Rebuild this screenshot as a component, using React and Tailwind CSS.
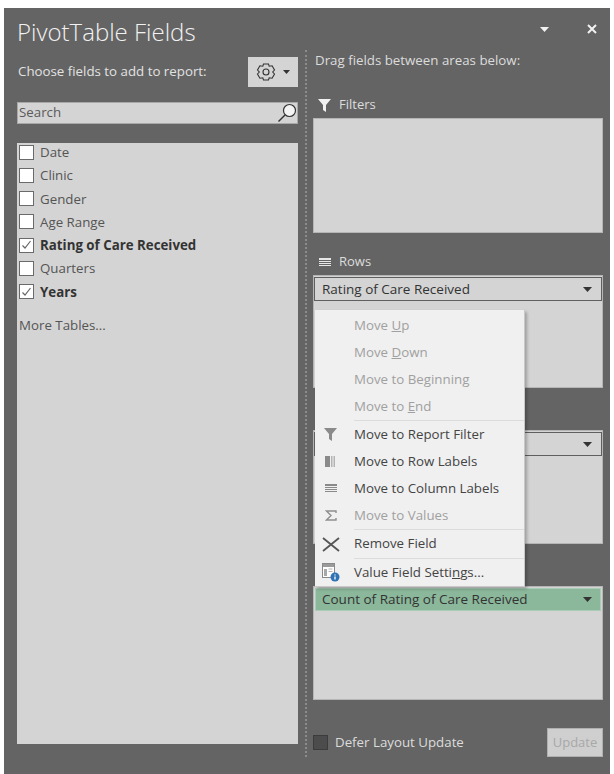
import React from "react";

const font = { fontFamily: '"Open Sans", "Noto Sans", sans-serif' };

const fields = [
  { name: "Date" },
  { name: "Clinic" },
  { name: "Gender" },
  { name: "Age Range" },
  { name: "Rating of Care Received", on: true },
  { name: "Quarters" },
  { name: "Years", on: true },
];

const Caret = ({ className = "" }) => (
  <svg width="9" height="5" viewBox="0 0 9 5" className={className}>
    <path d="M0 0h9L4.5 5z" fill="currentColor" />
  </svg>
);

const Funnel = ({ color }) => (
  <svg width="13" height="13" viewBox="0 0 13 13">
    <path d="M0 0h13L8 6v7L5 11V6z" fill={color} />
  </svg>
);

const RowLines = ({ color }) => (
  <svg width="12" height="9" viewBox="0 0 12 9">
    <path d="M0 0h12v2H0z" fill={color} />
    <path d="M0 3.5h12M0 5.5h12M0 7.5h12" stroke={color} strokeWidth="1" />
  </svg>
);

const ColumnBars = () => (
  <svg width="11" height="11" viewBox="0 0 11 11">
    <path d="M0 0h5v11H0z" fill="#8a8a8a" />
    <path d="M6 0h1.500v11H6zM8.500 0H10v11H8.500z" fill="#b4b4b4" />
  </svg>
);

const Sigma = () => (
  <svg width="12" height="11" viewBox="0 0 12 11">
    <path d="M11 3V1H1.500l4.500 4.500L1.500 10H11V8" fill="none" stroke="#8e8e8e" strokeWidth="1.400" />
  </svg>
);

const CrossIcon = () => (
  <svg width="18" height="15" viewBox="0 0 18 15">
    <path d="M1 1l16 13M17 1L1 14" stroke="#555" strokeWidth="1.800" fill="none" />
  </svg>
);

const SettingsIcon = () => (
  <svg width="18" height="19" viewBox="0 0 18 19">
    <rect x="0.500" y="0.500" width="12" height="14" fill="#fff" stroke="#8a8a8a" />
    <path d="M1 1h11v3H1z" fill="#9a9a9a" />
    <path d="M2 6h3v7H2z" fill="#a8a8a8" />
    <path d="M6.500 6h4M6.500 8.500h4" stroke="#b5b5b5" />
    <circle cx="13" cy="14" r="4.500" fill="#2f73b5" />
    <path d="M13 11.500v1M13 13.500v3" stroke="#fff" strokeWidth="1.300" />
  </svg>
);

const Gear = () => (
  <svg width="20" height="18" viewBox="0 0 20 18" fill="none" stroke="#333" strokeWidth="1.100">
    <path d="M7.500 1h5l.7 2.200 2.900-.4 2.400 4.200-1.800 2 1.800 2-2.400 4.200-2.900-.4-.7 2.200h-5l-.7-2.200-2.900.4L1.500 11l1.800-2-1.800-2 2.400-4.200 2.900.4z" />
    <circle cx="10" cy="9" r="3" />
  </svg>
);

const Magnifier = () => (
  <svg width="20" height="20" viewBox="0 0 20 20" fill="none">
    <circle cx="12.500" cy="7.500" r="6" fill="#f4f4f4" stroke="#333" strokeWidth="1.200" />
    <path d="M8 12l-6.500 6.500" stroke="#333" strokeWidth="1.400" />
  </svg>
);

const Checkbox = ({ on }) => (
  <span className="flex h-[15px] w-[15px] shrink-0 items-center justify-center border border-[#6a6a6a] bg-white">
    {on && (
      <svg width="11" height="10" viewBox="0 0 11 10">
        <path d="M1.500 5.500l2.500 2.500 5.500-7" fill="none" stroke="#666" strokeWidth="1.200" />
      </svg>
    )}
  </span>
);

const FieldPill = ({ label, green }) => (
  <div
    className={
      green
        ? "mx-[1px] mt-[1px] flex h-[23px] items-center justify-between border border-[#a9cdb6] bg-[#8bb89b] pl-[6px] pr-[8px] text-[#333]"
        : "mt-[1px] flex h-[24px] items-center justify-between border border-[#5f5f5f] bg-[#d4d4d4] pl-[7px] pr-[9px] text-[#333]"
    }
  >
    <span className="text-[13.500px]">{label}</span>
    <Caret className="text-[#333]" />
  </div>
);

// the Columns and Values headers sit behind the menu, so those two stay empty
const Area = ({ icon, label, height, children }) => (
  <div className="mt-[18px]">
    <div className="mb-[2px] flex h-[22px] items-center gap-[8px] pl-[5px] text-[13px] text-[#dcdcdc]">
      <span className="flex w-[13px] justify-center">{icon}</span>
      <span>{label}</span>
    </div>
    <div className={`border border-[#b5b5b5] bg-[#d4d4d4] ${height}`}>{children}</div>
  </div>
);

const MenuItem = ({ icon, off, tall, children }) => (
  <div className={`flex items-center ${tall ? "h-[28px]" : "h-[27px]"}`}>
    <span className="mr-[8px] flex w-[31px] shrink-0 justify-center">{icon}</span>
    <span className={`text-[13.300px] ${off ? "text-[#a0a0a0]" : "text-[#444]"}`}>{children}</span>
  </div>
);

const Divider = () => <div className="ml-[39px] h-px bg-[#dcdcdc]" />;

export default function App() {
  return (
    <div className="min-h-screen bg-white pl-[4px] pr-[4px] pt-[8px]" style={font}>
      <div className="relative flex h-[766px] bg-[#646464] pl-[13px]">
        {/* left side, field list */}
        <div className="w-[281px] shrink-0 pt-[9px]">
          <div className="h-[29px] text-[24px] font-light leading-[29px] text-[#f2f2f2]">PivotTable Fields</div>
          <div className="mt-[11px] flex items-center justify-between">
            <span className="pl-[1px] text-[13.300px] text-[#e2e2e2]">Choose fields to add to report:</span>
            <div className="flex h-[30px] w-[50px] items-center justify-center gap-[7px] bg-[#d4d4d4] text-[#333]">
              <Gear />
              <Caret className="h-[4px] w-[7px]" />
            </div>
          </div>
          <div className="mt-[15px] flex h-[22px] items-center justify-between border border-[#a8a8a8] bg-[#d4d4d4] pl-[1px] text-[13.300px] text-[#5a5a5a]">
            <span>Search</span>
            <Magnifier />
          </div>
          <div className="mt-[19px] h-[601px] bg-[#d4d4d4] pl-[2px]">
            <div className="flex flex-col gap-[5.300px]">
              {fields.map((f) => (
                <div key={f.name} className="flex h-[18px] items-center gap-[6px]">
                  <Checkbox on={f.on} />
                  <span className={`text-[13.300px] leading-[18px] ${f.on ? "font-bold text-[#333]" : "text-[#555]"}`}>{f.name}</span>
                </div>
              ))}
            </div>
            <div className="mt-[15px] text-[13.300px] leading-[18px] text-[#555]">More Tables...</div>
          </div>
        </div>

        {/* dotted splitter */}
        <div className="mb-[17px] ml-[7px] mt-[42px] w-px border-l-2 border-dotted border-[#8c8c8c]" />

        {/* right side, drop areas */}
        <div className="ml-[6px] w-[290px] shrink-0">
          <div className="flex h-[30px] items-end justify-end gap-[38px] pr-[6px] text-[#f2f2f2]">
            <Caret className="mb-[6px]" />
            <svg width="10" height="10" viewBox="0 0 10 10" className="mb-[4px]">
              <path d="M1 1l8 8M9 1L1 9" stroke="currentColor" strokeWidth="2" />
            </svg>
          </div>
          <div className="mt-[13px] h-[18px] pl-[2px] text-[13.300px] leading-[18px] text-[#dcdcdc]">Drag fields between areas below:</div>
          <div className="pt-[7px]">
            <Area icon={<Funnel color="#f2f2f2" />} label="Filters" height="h-[115px]" />
          </div>
          <Area icon={<RowLines color="#e6e6e6" />} label="Rows" height="h-[113px]">
            <FieldPill label="Rating of Care Received" />
          </Area>
          <Area height="h-[114px]">
            <FieldPill label="" />
          </Area>
          <Area height="h-[114px]">
            <FieldPill label="Count of Rating of Care Received" green />
          </Area>
          <div className="mt-[28px] flex items-center justify-between">
            <div className="flex items-center gap-[7px]">
              <span className="h-[15px] w-[15px] border border-[#3c3c3c] bg-[#4c4c4c]" />
              <span className="text-[13.300px] text-[#dcdcdc]">Defer Layout Update</span>
            </div>
            <div className="flex h-[29px] w-[56px] items-center justify-center border border-[#b0b0b0] bg-[#cfcfcf] text-[13px] text-[#a8a8a8]">
              Update
            </div>
          </div>
        </div>

        {/* context menu over the areas */}
        <div className="absolute left-[311px] top-[302px] w-[210px] border-r border-b border-[#c8c8c8] bg-[#f0f0f0] pt-[2px] shadow-[2px_2px_3px_rgba(0,0,0,0.25)]">
          <MenuItem off>Move <u>U</u>p</MenuItem>
          <MenuItem off>Move <u>D</u>own</MenuItem>
          <MenuItem off>Move to Be<u>g</u>inning</MenuItem>
          <MenuItem off>Move to <u>E</u>nd</MenuItem>
          <Divider />
          <MenuItem icon={<Funnel color="#8a8a8a" />}>Move to Report Filter</MenuItem>
          <MenuItem icon={<ColumnBars />}>Move to Row Labels</MenuItem>
          <MenuItem icon={<RowLines color="#8a8a8a" />}>Move to Column Labels</MenuItem>
          <MenuItem icon={<Sigma />} off>Move to Values</MenuItem>
          <Divider />
          <MenuItem icon={<CrossIcon />} tall>Remove Field</MenuItem>
          <Divider />
          <MenuItem icon={<SettingsIcon />}>Value Field Setti<u>n</u>gs...</MenuItem>
        </div>
      </div>
    </div>
  );
}
